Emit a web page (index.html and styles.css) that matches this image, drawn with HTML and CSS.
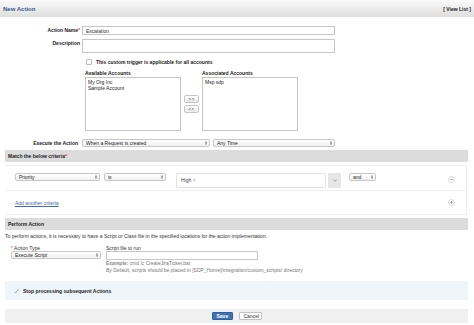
FILE: index.html
```html
<!DOCTYPE html>
<html>
<head>
    <link rel="stylesheet" href="styles.css">
</head>
<body>
    <div class="page-header">
        <span class="title">New Action</span>
        <span class="view-list">[ <a href="#">View List</a> ]</span>
    </div>

    <form class="action-form">
        <div class="field">
            <label class="field-label">Action Name<span class="req">*</span></label>
            <input type="text" class="text-input wide" value="Escalation">
        </div>

        <div class="field">
            <label class="field-label">Description</label>
            <textarea class="text-area wide"></textarea>
        </div>

        <div class="field-body">
            <div class="check-line">
                <span class="check-box"></span>
                <span class="bold">This custom trigger is applicable for all accounts</span>
            </div>

            <div class="accounts">
                <div class="account-col">
                    <div class="bold">Available Accounts</div>
                    <div class="list-box">
                        <div>My Org Inc</div>
                        <div>Sample Account</div>
                    </div>
                </div>
                <div class="move-buttons">
                    <span class="small-btn">&gt;&gt;</span>
                    <span class="small-btn">&lt;&lt;</span>
                </div>
                <div class="account-col">
                    <div class="bold">Associated Accounts</div>
                    <div class="list-box">
                        <div>Msp sdp</div>
                    </div>
                </div>
            </div>
        </div>

        <div class="field execute">
            <label class="field-label">Execute the Action</label>
            <div class="select when">When a Request is created<svg class="arrows" viewBox="0 0 4 7"><path d="M2 0 L4 2.6 H0 Z M2 7 L4 4.4 H0 Z"/></svg></div>
            <div class="select time">Any Time<svg class="arrows" viewBox="0 0 4 7"><path d="M2 0 L4 2.6 H0 Z M2 7 L4 4.4 H0 Z"/></svg></div>
        </div>

        <div class="section-bar">Match the below criteria<span class="req">*</span></div>

        <div class="criteria">
            <div class="criteria-row first">
                <div class="select priority">Priority<svg class="arrows" viewBox="0 0 4 7"><path d="M2 0 L4 2.6 H0 Z M2 7 L4 4.4 H0 Z"/></svg></div>
                <div class="select operator">is<svg class="arrows" viewBox="0 0 4 7"><path d="M2 0 L4 2.6 H0 Z M2 7 L4 4.4 H0 Z"/></svg></div>
                <div class="value-box"><span class="tag">High <span class="tag-x">&times;</span></span></div>
                <span class="drop-btn"><svg viewBox="0 0 6 4"><path d="M0.5 0.5 L3 3.2 L5.5 0.5" fill="none" stroke="#777" stroke-width="0.9"/></svg></span>
                <div class="select join">and<svg class="arrows" viewBox="0 0 4 7"><path d="M2 0 L4 2.6 H0 Z M2 7 L4 4.4 H0 Z"/></svg></div>
                <svg class="round-icon" viewBox="0 0 8 8"><circle cx="4" cy="4" r="3.4" fill="#fff" stroke="#c8c8c8" stroke-width="0.8"/><path d="M2.4 4 H5.6" stroke="#999" stroke-width="0.8"/></svg>
            </div>
            <div class="criteria-row">
                <a href="#" class="add-link">Add another criteria</a>
                <svg class="round-icon" viewBox="0 0 8 8"><circle cx="4" cy="4" r="3.4" fill="#fff" stroke="#c8c8c8" stroke-width="0.8"/><path d="M2.4 4 H5.6 M4 2.4 V5.6" stroke="#999" stroke-width="0.8"/></svg>
            </div>
        </div>

        <div class="section-bar">Perform Action</div>

        <div class="perform">
            <p class="note">To perform actions, it is necessary to have a Script or Class file in the specified locations for the action implementation.</p>
            <div class="perform-fields">
                <div class="type-col">
                    <div class="small-label"><span class="req">*</span> Action Type</div>
                    <div class="select type">Execute Script<svg class="arrows" viewBox="0 0 4 7"><path d="M2 0 L4 2.6 H0 Z M2 7 L4 4.4 H0 Z"/></svg></div>
                </div>
                <div class="script-col">
                    <div class="small-label">Script file to run</div>
                    <input type="text" class="text-input script">
                    <div class="hint"><span class="hint-key">Example:</span> cmd /c CreateJiraTicket.bat</div>
                    <div class="hint">By Default, scripts should be placed in [SDP_Home]/integration/custom_scripts/ directory</div>
                </div>
            </div>
        </div>

        <div class="stop-panel">
            <svg class="tick" viewBox="0 0 6 6"><path d="M0.6 3.6 L2 5.2 L5.4 0.6" fill="none" stroke="#7a8fa8" stroke-width="0.9"/></svg>
            <span class="bold">Stop processing subsequent Actions</span>
        </div>

        <div class="footer">
            <button type="submit" class="btn save">Save</button>
            <button type="button" class="btn cancel">Cancel</button>
        </div>
    </form>
</body>
</html>
```

FILE: styles.css
```css
body {
    margin: 0;
    font-family: "Liberation Sans", Arial, sans-serif;
    font-size: 5px;
    color: #333;
    background: #fff;
}

.bold {
    font-weight: bold;
    color: #222;
}

.req {
    color: #d33;
}

.page-header {
    height: 17px;
    display: flex;
    justify-content: space-between;
    align-items: center;
    padding: 0 3px;
    background: linear-gradient(#fbfbfb, #dedede);
}

.page-header .title {
    font-size: 6px;
    font-weight: bold;
    color: #3a5a8c;
}

.view-list {
    font-weight: bold;
    color: #222;
}

.view-list a {
    color: #222;
    text-decoration: none;
}

.action-form {
    padding-top: 9px;
}

.field {
    display: flex;
    align-items: flex-start;
    margin-bottom: 4px;
}

.field-label {
    width: 80px;
    padding-right: 2px;
    text-align: right;
    font-weight: bold;
    color: #222;
    line-height: 9px;
}

.text-input {
    box-sizing: border-box;
    height: 9px;
    padding: 0 3px;
    border: 1px solid #c6c6c6;
    font-family: inherit;
    font-size: 5px;
    color: #333;
    outline: none;
}

.wide {
    width: 253px;
}

.text-area {
    box-sizing: border-box;
    height: 14px;
    padding: 1px 3px;
    border: 1px solid #c6c6c6;
    font-family: inherit;
    font-size: 5px;
    resize: none;
}

.field-body {
    padding-left: 85px;
    padding-top: 2px;
}

.check-line {
    display: flex;
    align-items: center;
    gap: 4px;
    height: 6px;
    padding-left: 1px;
}

.check-box {
    width: 4px;
    height: 4px;
    border: 1px solid #bbb;
    border-radius: 1px;
    background: #fff;
}

.accounts {
    display: flex;
    margin-top: 5px;
}

.account-col .bold {
    height: 7px;
}

.list-box {
    box-sizing: border-box;
    width: 96px;
    height: 54px;
    padding: 1px 2px;
    border: 1px solid #c6c6c6;
    line-height: 6px;
    color: #222;
}

.move-buttons {
    width: 21px;
    display: flex;
    flex-direction: column;
    align-items: center;
    justify-content: center;
    gap: 2px;
    padding-top: 7px;
}

.small-btn {
    box-sizing: border-box;
    width: 15px;
    height: 8px;
    border: 1px solid #c6c6c6;
    border-radius: 2px;
    background: linear-gradient(#fff, #ececec);
    font-size: 5px;
    text-align: center;
    line-height: 6px;
    color: #444;
    letter-spacing: 0.3px;
}

.execute {
    margin-top: 8px;
    margin-bottom: 3px;
    align-items: center;
}

.execute .field-label {
    line-height: 8px;
    padding-right: 4px;
    width: 78px;
}

.select {
    box-sizing: border-box;
    height: 8px;
    display: flex;
    align-items: center;
    justify-content: space-between;
    padding: 0 2px 0 3px;
    border: 1px solid #c6c6c6;
    border-radius: 2px;
    background: linear-gradient(#fff, #f1f1f1);
    color: #222;
}

.arrows {
    flex: none;
    width: 2px;
    height: 4px;
    fill: #333;
}

.when {
    width: 128px;
    margin-right: 3px;
}

.time {
    width: 122px;
}

.section-bar {
    margin: 0 6px 0 5px;
    height: 12px;
    padding-left: 3px;
    display: flex;
    align-items: center;
    background: #dcdcdc;
    font-weight: bold;
    color: #222;
}

.criteria {
    margin: 3px 7px 3px 5px;
    border: 1px solid #eee;
    border-left: none;
}

.criteria-row {
    display: flex;
    align-items: center;
    padding: 0 10px;
    height: 23px;
    border-bottom: 1px solid #eee;
}

.criteria-row:last-child {
    border-bottom: none;
}

.criteria-row.first {
    align-items: flex-start;
    padding-top: 7px;
    height: 17px;
}

.priority {
    width: 85px;
    margin-right: 4px;
}

.operator {
    width: 62px;
    margin-right: 10px;
}

.value-box {
    box-sizing: border-box;
    width: 150px;
    height: 15px;
    padding: 3px 4px;
    border: 1px solid #e2e2e2;
    border-radius: 2px;
}

.tag {
    color: #444;
}

.tag-x {
    color: #aaa;
}

.drop-btn {
    width: 13px;
    height: 15px;
    margin-left: 2px;
    margin-right: 8px;
    display: flex;
    align-items: center;
    justify-content: center;
    background: #e6e6e6;
}

.drop-btn svg {
    width: 4px;
    height: 3px;
}

.join {
    width: 27px;
}

.round-icon {
    width: 7px;
    height: 7px;
    margin-left: auto;
    margin-right: 1px;
}

.criteria-row.first .round-icon {
    margin-top: 3px;
}

.add-link {
    color: #3b6db3;
    text-decoration: underline;
}

.perform {
    padding: 0 5px;
}

.note {
    margin: 3px 0 6px;
    line-height: 6px;
}

.perform-fields {
    display: flex;
}

.type-col {
    padding-left: 6px;
}

.small-label {
    line-height: 6px;
}

.type {
    width: 90px;
}

.script-col {
    padding-left: 5px;
}

.script {
    width: 152px;
    display: block;
}

.hint {
    color: #777;
    line-height: 7px;
}

.hint-key {
    font-weight: bold;
    color: #888;
}

.stop-panel {
    margin: 7px 6px 0 5px;
    height: 19px;
    display: flex;
    align-items: center;
    gap: 4px;
    padding-left: 9px;
    background: #eef5fb;
}

.tick {
    width: 5px;
    height: 6px;
}

.footer {
    margin: 9px 0 0 5px;
    width: 463px;
    height: 14px;
    display: flex;
    justify-content: center;
    align-items: center;
    gap: 6px;
    background: #f0f0f0;
}

.btn {
    height: 8px;
    padding: 0 4px;
    border-radius: 1px;
    font-family: inherit;
    font-size: 5px;
    line-height: 6px;
}

.save {
    border: 1px solid #2f5f9e;
    background: #3d72b4;
    color: #fff;
    font-weight: bold;
    width: 21px;
}

.cancel {
    border: 1px solid #c2c2c2;
    background: #fff;
    color: #333;
    width: 23px;
}
```
